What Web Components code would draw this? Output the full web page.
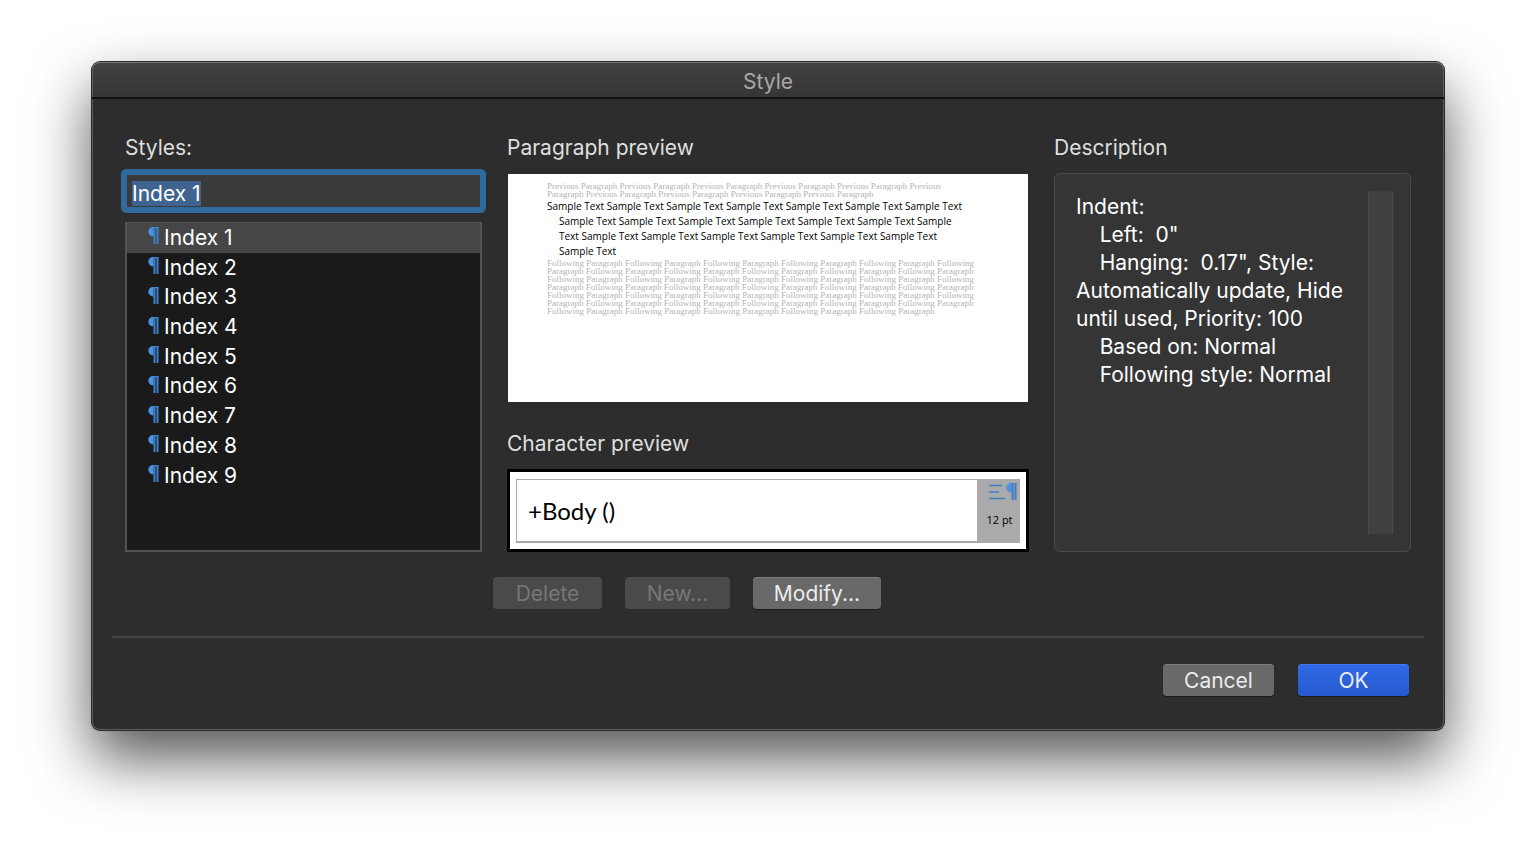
<!DOCTYPE html>
<html lang="en">
<head>
<meta charset="utf-8">
<title>Style</title>
<style>
    body {
        box-sizing: border-box;
        min-height: 100vh;
        margin: 0;
        padding: 62px 92px;
        background: #fff;
        font-family: Inter, "Liberation Sans", sans-serif;
        font-size: 21px;
        line-height: 26px;
        color: #dfdfdf;
    }
</style>
</head>
<body>
<style-dialog heading="Style">
    <style-picker slot="styles" label="Styles:" value="Index 1" count="9"></style-picker>
    <preview-pane slot="previews"></preview-pane>
    <style-description slot="description" label="Description">Indent:
    Left:  0"
    Hanging:  0.17", Style: Automatically update, Hide until used, Priority: 100
    Based on: Normal
    Following style: Normal</style-description>
    <push-button slot="actions" size="m" disabled>Delete</push-button>
    <push-button slot="actions" size="s" disabled>New...</push-button>
    <push-button slot="actions" size="xl">Modify...</push-button>
    <push-button slot="footer" size="l">Cancel</push-button>
    <push-button slot="footer" size="l" primary>OK</push-button>
</style-dialog>

<script>
(function () {
    function makeTemplate(html) {
        const template = document.createElement('template');
        template.innerHTML = html;
        return template;
    }

    class BaseElement extends HTMLElement {
        constructor() {
            super();
            this.attachShadow({mode: 'open'});
            this.shadowRoot.appendChild(this.constructor.template.content.cloneNode(true));
        }

        $(selector) {
            return this.shadowRoot.querySelector(selector);
        }
    }

    class StyleDialog extends BaseElement {
        connectedCallback() {
            this.$('h1').textContent = this.getAttribute('heading');
        }
    }
    StyleDialog.template = makeTemplate(`
    <style>
        :host {
            display: block;
            background: #2d2d2d;
            border-radius: 8px;
            box-shadow:
                inset 0 0 0 1px #5c5c5c,
                0 0 0 1px #2a2a2a,
                0 28px 60px rgba(0, 0, 0, .68);
        }

        header {
            height: 35px;
            border-bottom: 2px solid #101010;
            border-radius: 8px 8px 0 0;
            background: linear-gradient(#424242, #353535);
            box-shadow: inset 0 1px 0 #787878, inset 1px 0 0 #5c5c5c, inset -1px 0 0 #5c5c5c;
        }

        h1 {
            margin: 0;
            font-size: 21px;
            line-height: 39px;
            font-weight: 400;
            text-align: center;
            color: #a9a9a9;
        }

        .content {
            display: grid;
            grid-template-columns: 357fr 522fr 357fr;
            column-gap: 25px;
            padding: 36px 33px 27px;
        }

        /* push buttons start a little left of the preview column */
        .actions {
            display: flex;
            grid-column: 2 / span 2;
            gap: 23px;
            margin: 25px 0 0 -14px;
        }

        footer {
            display: flex;
            justify-content: flex-end;
            gap: 24px;
            margin: 0 20px;
            padding: 26px 15px 34px;
            border-top: 2px solid #434343;
        }
    </style>
    <header><h1></h1></header>
    <div class="content">
        <slot name="styles"></slot>
        <slot name="previews"></slot>
        <slot name="description"></slot>
        <div class="actions"><slot name="actions"></slot></div>
    </div>
    <footer><slot name="footer"></slot></footer>
    `);

    class PilcrowIcon extends BaseElement {}
    PilcrowIcon.template = makeTemplate(`
    <style>
        :host {
            display: block;
            width: 11px;
            height: 17px;
        }

        svg {
            display: block;
        }
    </style>
    <svg width="11" height="17" viewBox="0 0 11 17" aria-hidden="true">
        <path d="M5.5 0H5a4.7 4.7 0 0 0 0 9.4h.5z" fill="#4a94e6"></path>
        <path d="M5 0h5.5v1.4H5z" fill="#4a8fdc"></path>
        <path d="M5.5 0h1.7v17H5.5z" fill="#3f7fc8"></path>
        <path d="M7.2 1.4h1.6v15.6H7.2z" fill="#3a75b8" opacity=".55"></path>
        <path d="M8.8 0h1.7v17H8.8z" fill="#3f7fc8"></path>
    </svg>
    `);

    class StylePicker extends BaseElement {
        connectedCallback() {
            const value = this.getAttribute('value');
            const input = this.$('input');
            const list = this.$('ul');

            this.$('label').textContent = this.getAttribute('label');
            input.value = value;

            for (let i = 1; i <= Number(this.getAttribute('count')); i++) {
                const name = 'Index ' + i;
                const item = document.createElement('li');
                item.setAttribute('role', 'none');
                item.innerHTML = `<button type="button" role="option" aria-selected="${name === value}">
                    <pilcrow-icon></pilcrow-icon><span>${name}</span></button>`;
                list.appendChild(item);
            }

            list.addEventListener('click', (e) => {
                const button = e.target.closest('button');
                if (button) this._select(button);
            });

            input.focus();
            input.select();
        }

        _select(button) {
            this.shadowRoot.querySelectorAll('button').forEach(b => b.setAttribute('aria-selected', b === button));
            this.$('input').value = button.textContent.trim();
        }
    }
    StylePicker.template = makeTemplate(`
    <style>
        :host {
            display: flex;
            flex-direction: column;
            min-width: 0;
        }

        label {
            margin-bottom: 12px;
        }

        input {
            box-sizing: border-box;
            width: 100%;
            height: 36px;
            margin: 0 0 13px;
            padding: 4px 5px 0;
            border: 2px solid #2f6b9c;
            border-radius: 2px;
            outline: none;
            box-shadow: 0 0 0 4px #2f6b9c;
            background: #3a3a3a;
            font: inherit;
            color: #fff;
        }

        input::selection {
            background: #41638f;
            color: #fff;
        }

        /* eleven rows fit in the list, filled or not */
        ul {
            display: grid;
            grid-template-rows: repeat(11, 1fr);
            flex: 1;
            margin: 0;
            padding: 0;
            border: 2px solid #545454;
            border-top-width: 1px;
            background: #1a1a1a;
            list-style: none;
        }

        li {
            display: flex;
            min-height: 0;
        }

        button {
            display: flex;
            align-items: center;
            gap: 5px;
            width: 100%;
            padding: 0 21px;
            border: 0;
            background: none;
            font: inherit;
            color: #fff;
        }

        button[aria-selected="true"] {
            background: #464646;
        }

        pilcrow-icon {
            margin-bottom: 4px;
        }
    </style>
    <label for="name"></label>
    <input id="name" type="text" autocomplete="off">
    <ul role="listbox" aria-label="Styles"></ul>
    `);

    class PreviewPane extends BaseElement {}
    PreviewPane.template = makeTemplate(`
    <style>
        :host {
            display: flex;
            flex-direction: column;
            min-width: 0;
        }

        h2 {
            margin: 0;
            font: inherit;
        }

        .page {
            box-sizing: border-box;
            height: 228px;
            margin: 13px 1px 29px;
            padding: 8px 39px;
            overflow: hidden;
            background: #fff;
            white-space: nowrap;
        }

        p {
            margin: 0;
        }

        .context {
            font-family: "Liberation Serif", serif;
            font-size: 9px;
            line-height: 8px;
            color: #b4b4b4;
        }

        .sample {
            padding: 1px 0 0 12px;
            text-indent: -12px;
            font-family: "Open Sans", sans-serif;
            font-size: 10px;
            line-height: 15px;
            color: #000;
        }

        .character {
            display: flex;
            margin-top: 12px;
            padding: 7px 6px 6px;
            border: 3px solid #000;
            background: #fff;
            color: #000;
        }

        .font {
            flex: 1;
            padding-left: 11px;
            border: solid #aaa;
            border-width: 1px 0 2px 1px;
            font-family: Lato, sans-serif;
            font-size: 24px;
            line-height: 61px;
        }

        .size {
            display: flex;
            flex-direction: column;
            align-items: center;
            gap: 10px;
            width: 43px;
            padding: 4px 0 0 2px;
            box-sizing: border-box;
            background: #aaa;
            font-family: "Open Sans", sans-serif;
            font-size: 11px;
            line-height: 20px;
        }

        .mark {
            display: flex;
            align-self: flex-end;
            gap: 1px;
            margin-right: 3px;
        }
    </style>
    <h2>Paragraph preview</h2>
    <div class="page">
        <p class="context">Previous Paragraph Previous Paragraph Previous Paragraph Previous Paragraph Previous Paragraph Previous<br>
            Paragraph Previous Paragraph Previous Paragraph Previous Paragraph Previous Paragraph</p>
        <p class="sample">Sample Text Sample Text Sample Text Sample Text Sample Text Sample Text Sample Text<br>
            Sample Text Sample Text Sample Text Sample Text Sample Text Sample Text Sample<br>
            Text Sample Text Sample Text Sample Text Sample Text Sample Text Sample Text<br>
            Sample Text</p>
        <p class="context">Following Paragraph Following Paragraph Following Paragraph Following Paragraph Following Paragraph Following<br>
            Paragraph Following Paragraph Following Paragraph Following Paragraph Following Paragraph Following Paragraph<br>
            Following Paragraph Following Paragraph Following Paragraph Following Paragraph Following Paragraph Following<br>
            Paragraph Following Paragraph Following Paragraph Following Paragraph Following Paragraph Following Paragraph<br>
            Following Paragraph Following Paragraph Following Paragraph Following Paragraph Following Paragraph Following<br>
            Paragraph Following Paragraph Following Paragraph Following Paragraph Following Paragraph Following Paragraph<br>
            Following Paragraph Following Paragraph Following Paragraph Following Paragraph Following Paragraph</p>
    </div>
    <h2>Character preview</h2>
    <div class="character">
        <div class="font">+Body ()</div>
        <div class="size">
            <div class="mark">
                <svg width="16" height="17" viewBox="0 0 16 17" aria-hidden="true">
                    <path d="M0 2.5h13M0 9h10M0 15.5h16" stroke="#3f7fc6" stroke-width="1.6"></path>
                </svg>
                <pilcrow-icon></pilcrow-icon>
            </div>
            <span>12 pt</span>
        </div>
    </div>
    `);

    class StyleDescription extends BaseElement {
        connectedCallback() {
            this.$('h2').textContent = this.getAttribute('label');
        }
    }
    StyleDescription.template = makeTemplate(`
    <style>
        :host {
            display: flex;
            flex-direction: column;
            min-width: 0;
        }

        h2 {
            margin: 0 0 12px;
            font: inherit;
        }

        .box {
            display: flex;
            flex: 1;
            padding: 17px;
            border: 1px solid #4a4a4a;
            border-radius: 6px;
            background: #353535;
        }

        .text {
            flex: 1;
            padding: 2px 20px 0 4px;
            line-height: 28px;
            white-space: pre-wrap;
            color: #fff;
        }

        .track {
            box-sizing: border-box;
            width: 25px;
            border: solid #4a4a4a;
            border-width: 0 1px;
            background: #404040;
        }
    </style>
    <h2></h2>
    <div class="box">
        <div class="text"><slot></slot></div>
        <div class="track"></div>
    </div>
    `);

    class PushButton extends BaseElement {
        connectedCallback() {
            this.$('button').disabled = this.hasAttribute('disabled');
        }
    }
    PushButton.template = makeTemplate(`
    <style>
        :host {
            display: block;
            width: 111px;
        }

        :host([size="s"]) { width: 105px; }
        :host([size="m"]) { width: 109px; }
        :host([size="xl"]) { width: 128px; }

        button {
            width: 100%;
            height: 32px;
            padding: 2px 0 0;
            border: 0;
            border-radius: 4px;
            background: #696969;
            box-shadow: inset 0 1px 0 #7c7c7c, 0 1px 1px rgba(0, 0, 0, .4);
            font: inherit;
            color: #ececec;
        }

        button:disabled {
            background: #4a4a4a;
            box-shadow: none;
            color: #767676;
        }

        :host([primary]) button {
            background: linear-gradient(#2f6ae8, #2759cd);
            box-shadow: inset 0 1px 0 #3f78ea, 0 1px 1px rgba(0, 0, 0, .4);
        }
    </style>
    <button type="button"><slot></slot></button>
    `);

    window.customElements.define('pilcrow-icon', PilcrowIcon);
    window.customElements.define('push-button', PushButton);
    window.customElements.define('style-picker', StylePicker);
    window.customElements.define('preview-pane', PreviewPane);
    window.customElements.define('style-description', StyleDescription);
    window.customElements.define('style-dialog', StyleDialog);
})();
</script>
</body>
</html>
